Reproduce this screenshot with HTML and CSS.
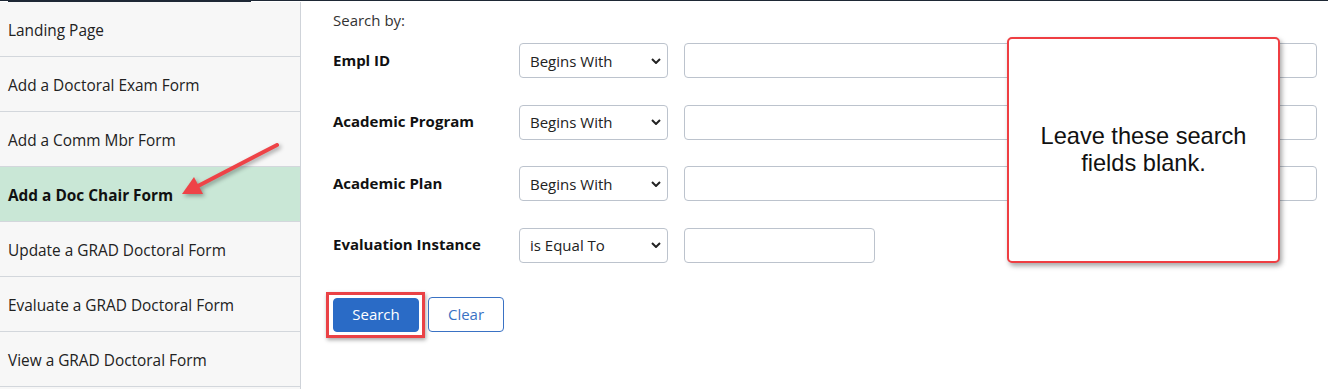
FILE: index.html
```html
<!DOCTYPE html>
<html lang="en">
<head>
    <meta charset="UTF-8" />
    <meta name="viewport" content="width=device-width, initial-scale=1.0"/>
    <title>Doctoral Forms – Search</title>
    <link rel="stylesheet" href="styles.css">
</head>
<body>
    <div class="topbar"><div class="topbar-tab"></div></div>

    <div class="layout">
        <nav class="sidebar">
            <a class="nav-item">Landing Page</a>
            <a class="nav-item">Add a Doctoral Exam Form</a>
            <a class="nav-item">Add a Comm Mbr Form</a>
            <a class="nav-item active">Add a Doc Chair Form</a>
            <a class="nav-item">Update a GRAD Doctoral Form</a>
            <a class="nav-item">Evaluate a GRAD Doctoral Form</a>
            <a class="nav-item">View a GRAD Doctoral Form</a>
        </nav>

        <main class="content">
            <div class="search-by">Search by:</div>

            <div class="criteria">
                <label class="field-label">Empl ID</label>
                <div class="select-box"><span>Begins With</span><svg class="chevron" viewBox="0 0 10 6"><path d="M1 1 L5 5 L9 1" /></svg></div>
                <div class="text-box"></div>

                <label class="field-label">Academic Program</label>
                <div class="select-box"><span>Begins With</span><svg class="chevron" viewBox="0 0 10 6"><path d="M1 1 L5 5 L9 1" /></svg></div>
                <div class="text-box"></div>

                <label class="field-label">Academic Plan</label>
                <div class="select-box"><span>Begins With</span><svg class="chevron" viewBox="0 0 10 6"><path d="M1 1 L5 5 L9 1" /></svg></div>
                <div class="text-box"></div>

                <label class="field-label">Evaluation Instance</label>
                <div class="select-box"><span>is Equal To</span><svg class="chevron" viewBox="0 0 10 6"><path d="M1 1 L5 5 L9 1" /></svg></div>
                <div class="text-box short"></div>
            </div>

            <div class="actions">
                <div class="highlight">
                    <button class="btn btn-primary">Search</button>
                </div>
                <button class="btn btn-outline">Clear</button>
            </div>
        </main>
    </div>

    <!-- Annotation layer -->
    <div class="callout">Leave these search<br>fields blank.</div>

    <svg class="arrow" width="1328" height="389" viewBox="0 0 1328 389">
        <g class="arrow-shape">
            <line x1="277" y1="145" x2="198" y2="186" />
            <polygon points="182,194 203,194 194,177" />
        </g>
    </svg>
</body>
</html>
```

FILE: styles.css
```css
body {
    margin: 0;
    padding: 0;
    background: #ffffff;
    font-family: 'Open Sans', 'Liberation Sans', sans-serif;
    font-size: 15px;
    color: #222;
    width: 1328px;
    height: 389px;
    overflow: hidden;
    position: relative;
}

/* dunkle Linie oben */
.topbar {
    height: 2px;
    box-sizing: border-box;
    border-top: 1px solid #1e2835;
    padding-left: 8px;
}

.topbar-tab {
    width: 243px;
    height: 1px;
    background: #1e2835;
}

.layout {
    display: flex;
    height: 387px;
}

/* --- Sidebar --- */
.sidebar {
    width: 300px;
    flex-shrink: 0;
    background: #f7f7f7;
    border-right: 1px solid #cfd3d9;
    display: flex;
    flex-direction: column;
}

.nav-item {
    height: 54px;
    border-bottom: 1px solid #d3d7dc;
    padding: 2px 0 0 8px;
    box-sizing: border-box;
    height: 55px;
    display: flex;
    align-items: center;
    font-size: 15.4px;
    color: #222;
    text-decoration: none;
}

.nav-item.active {
    background: #c9e7d6;
    font-weight: bold;
    color: #111;
}

/* --- Suchbereich --- */
.content {
    flex: 1;
    padding: 8px 11px 0 32px;
}

.search-by {
    line-height: 20px;
    color: #333;
}

.criteria {
    margin-top: 13px;
    display: grid;
    grid-template-columns: 170px 149px 1fr;
    grid-auto-rows: 35px;
    column-gap: 16px;
    row-gap: 26.5px;
    align-items: center;
}

.field-label {
    font-weight: bold;
    color: #111;
    margin-bottom: 2px;
}

.select-box {
    height: 35px;
    box-sizing: border-box;
    border: 1px solid #bcc3cd;
    border-radius: 4px;
    display: flex;
    align-items: center;
    justify-content: space-between;
    padding: 0 6px 0 10px;
    color: #222;
}

.chevron {
    width: 10px;
    height: 6px;
    fill: none;
    stroke: #222;
    stroke-width: 2;
}

.text-box {
    height: 35px;
    box-sizing: border-box;
    border: 1px solid #bcc3cd;
    border-radius: 4px;
}

.text-box.short {
    width: 191px;
}

.actions {
    margin-top: 29px;
    display: flex;
    align-items: center;
    gap: 3px;
}

.highlight {
    margin-left: -7px;
    border: 3px solid #ea4246;
    padding: 3px 3px 3px 4px;
    box-shadow: 1px 2px 4px rgba(0, 0, 0, 0.35);
    display: flex;
}

.btn {
    font-family: 'Open Sans', 'Liberation Sans', sans-serif;
    font-size: 15px;
    border-radius: 4px;
    cursor: pointer;
    padding: 0 0 2px;
}

.btn-primary {
    width: 86px;
    height: 34px;
    background: #2a6bc6;
    border: 1px solid #2a6bc6;
    color: #fff;
}

.btn-outline {
    width: 76px;
    height: 35px;
    background: #fff;
    border: 1px solid #3a72c4;
    color: #3a72c4;
}

/* --- Annotation --- */
.callout {
    position: absolute;
    left: 1007px;
    top: 37px;
    width: 273px;
    height: 226px;
    box-sizing: border-box;
    background: #fff;
    border: 2px solid #ef3e42;
    border-radius: 5px;
    box-shadow: 2px 3px 5px rgba(0, 0, 0, 0.35);
    display: flex;
    align-items: center;
    justify-content: center;
    text-align: center;
    font-family: 'Liberation Sans', Arial, sans-serif;
    font-size: 23.6px;
    line-height: 27px;
    color: #111;
}

.arrow {
    position: absolute;
    left: 0;
    top: 0;
    pointer-events: none;
}

.arrow-shape {
    filter: drop-shadow(2px 2px 2px rgba(0, 0, 0, 0.35));
}

.arrow-shape line {
    stroke: #ee4347;
    stroke-width: 4;
    stroke-linecap: round;
}

.arrow-shape polygon {
    fill: #ee4347;
}
```
